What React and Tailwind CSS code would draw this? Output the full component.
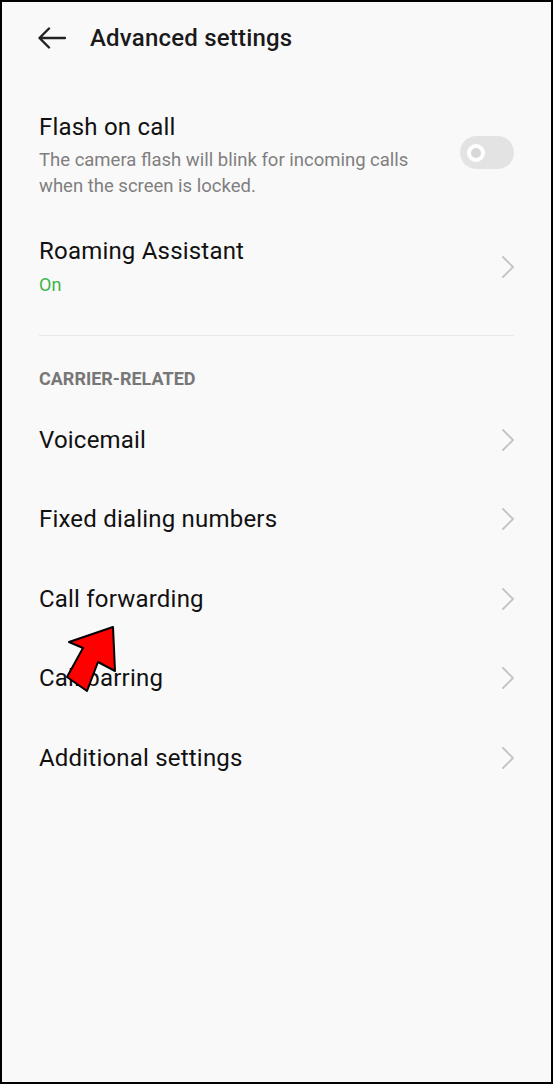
import React from "react";

function Chevron() {
  return (
    <svg width="14" height="24" viewBox="0 0 14 24" fill="none" className="shrink-0">
      <path d="M2 2 L12 12 L2 22" stroke="#c4c2c4" strokeWidth="1.8" strokeLinecap="round" strokeLinejoin="round" />
    </svg>
  );
}

function Row({ label }) {
  return (
    <div className="flex items-center justify-between h-[79.5px] pl-[37px] pr-[36px]">
      <span className="text-[24px] leading-[28px] tracking-[0.2px] text-[#111]">{label}</span>
      <Chevron />
    </div>
  );
}

export default function App() {
  return (
    <div
      className="relative w-[553px] h-[1084px] border-2 border-black bg-[#faf9fa] overflow-hidden"
      style={{ fontFamily: "Roboto, 'Noto Sans', sans-serif" }}
    >
      <div className="flex items-center h-[71px] pl-[34px]">
        <svg width="30" height="24" viewBox="0 0 30 24" fill="none">
          <path d="M29 12 H4 M13 2.5 L3.5 12 L13 21.5" stroke="#222" strokeWidth="2.4" strokeLinecap="round" strokeLinejoin="round" />
        </svg>
        <span className="ml-[24px] text-[24px] leading-[28px] font-medium tracking-[0.2px] text-[#1a1a1a]">Advanced settings</span>
      </div>

      <div className="flex items-start justify-between pl-[37px] pr-[37px] mt-[40px]">
        <div className="flex flex-col">
          <span className="text-[24px] leading-[28px] tracking-[0.2px] text-[#111]">Flash on call</span>
          <span className="mt-[6px] text-[18.5px] leading-[26px] text-[#7f7f7f] w-[390px]">
            The camera flash will blink for incoming calls when the screen is locked.
          </span>
        </div>
        <div className="mt-[23px] w-[54px] h-[33px] rounded-full bg-[#e4e3e4] flex items-center pl-[7px]">
          <div className="w-[18px] h-[18px] rounded-full border-[4px] border-white bg-[#d8d7d8]" />
        </div>
      </div>

      <div className="flex items-center justify-between pl-[37px] pr-[36px] mt-[38px]">
        <div className="flex flex-col">
          <span className="text-[24px] leading-[28px] tracking-[0.2px] text-[#111]">Roaming Assistant</span>
          <span className="mt-[8px] text-[18px] leading-[24px] text-[#3cb54b]">On</span>
        </div>
        <Chevron />
      </div>

      <div className="mx-[37px] mt-[38px] h-px bg-[#e9e7e9]" />

      <div className="pl-[37px] mt-[33px] text-[18px] leading-[20px] font-bold text-[#777]">
        CARRIER-RELATED
      </div>

      <div className="mt-[11px] flex flex-col">
        <Row label="Voicemail" />
        <Row label="Fixed dialing numbers" />
        <Row label="Call forwarding" />
        <Row label="Call barring" />
        <Row label="Additional settings" />
      </div>

      <svg
        className="absolute left-[-2px] top-[-2px] pointer-events-none"
        width="553"
        height="1084"
        viewBox="0 0 553 1084"
      >
        <polygon
          points="113,627 115,671 98,662 87,691 67,677 83,648 69,642"
          fill="#ff0000"
          stroke="#000"
          strokeWidth="2"
          strokeLinejoin="round"
        />
      </svg>
    </div>
  );
}
